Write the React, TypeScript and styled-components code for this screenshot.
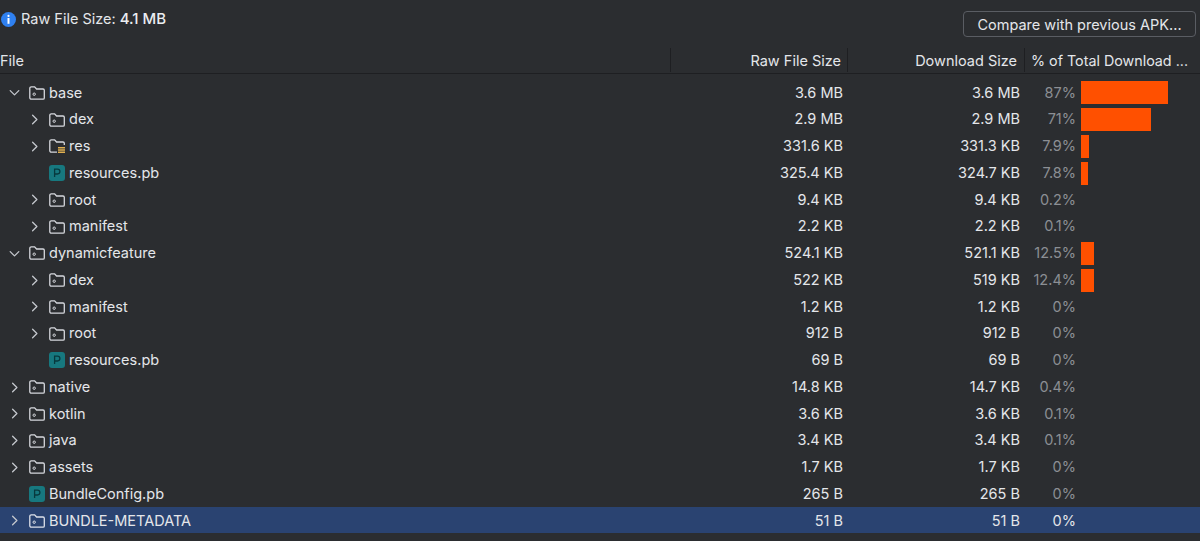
import React from "react";
import styled, { createGlobalStyle } from "styled-components";

const Global = createGlobalStyle`
  html, body { margin: 0; padding: 0; background: #2b2d30; }
  body { font-family: Inter, "Noto Sans", sans-serif; overflow: hidden; }
`;

const Page = styled.div`
  width: 1200px;
  height: 541px;
  background: #2b2d30;
  color: #e4e6ea;
  font-size: 14.5px;
  overflow: hidden;
`;

const TopBar = styled.div`
  height: 46px;
  box-sizing: border-box;
  padding: 11px 4px 0 1px;
  display: flex;
  justify-content: space-between;
  align-items: flex-start;
`;

const Summary = styled.div`
  display: flex;
  align-items: center;
  gap: 5px;
  height: 14px;
  margin-top: 1px;
  line-height: 14px;
`;

const Strong = styled.b`
  font-weight: 500;
  font-size: 15px;
  color: #eceef1;
`;

const CompareButton = styled.button`
  width: 233px;
  height: 26px;
  box-sizing: border-box;
  background: #2b2d30;
  border: 1px solid #5a5d63;
  border-radius: 4px;
  color: #e4e6ea;
  font: inherit;
  padding: 0;
`;

const columns = "671px 177px 177px 1fr";

const HeaderRow = styled.div`
  display: grid;
  grid-template-columns: ${columns};
  height: 27px;
  border-bottom: 1px solid #1e1f22;
  box-sizing: content-box;
`;

const HeaderCell = styled.div<{ $align?: string; $pad?: number; $divider?: boolean }>`
  text-align: ${(p) => p.$align ?? "left"};
  padding: 0 ${(p) => p.$pad ?? 0}px 0 0;
  border-right: ${(p) => (p.$divider ? "1px solid #1e1f22" : "0")};
  white-space: nowrap;
  overflow: hidden;
  box-sizing: border-box;
  height: 24px;
  line-height: 26px;
  margin-top: 2px;
`;

const PercentHeader = styled(HeaderCell)`
  padding-left: 6px;
  font-size: 14.3px;
`;

const Tree = styled.div`
  display: flex;
  flex-direction: column;
  padding-top: 4.5px;
`;

const Row = styled.div<{ $selected?: boolean }>`
  display: grid;
  grid-template-columns: ${columns};
  height: 26.75px;
  line-height: 26.75px;
  background: ${(p) => (p.$selected ? "#2a4371" : "transparent")};
`;

const NameCell = styled.div<{ $depth: number }>`
  display: flex;
  align-items: center;
  height: 26.75px;
  box-sizing: border-box;
  padding: 2px 0 0 ${(p) => 9 + p.$depth * 20}px;
`;

const ChevronSlot = styled.span`
  width: 11px;
  height: 11px;
  margin-right: 9px;
  display: flex;
  flex: none;
`;

const Label = styled.span`
  margin-left: 4px;
  white-space: nowrap;
`;

const Value = styled.div<{ $pad: number }>`
  text-align: right;
  padding: 1px ${(p) => p.$pad}px 0 0;
`;

const PercentCell = styled.div`
  display: flex;
  align-items: center;
  height: 26.75px;
  box-sizing: border-box;
  padding-top: 2px;
`;

const PercentText = styled.span<{ $selected?: boolean }>`
  width: 51px;
  text-align: right;
  color: ${(p) => (p.$selected ? "#e4e6ea" : "#8c8f94")};
  flex: none;
`;

const Bar = styled.span`
  height: 23px;
  margin-left: 5px;
  background: #ff5000;
  flex: none;
`;

const Chevron = ({ open }: { open?: boolean }) => (
  <svg width="11" height="11" viewBox="0 0 11 11" fill="none" stroke="#c4c7cd" strokeWidth="1.3" strokeLinecap="round" strokeLinejoin="round">
    {open ? <path d="M1.2 3.6l4.3 4.3 4.3-4.3" /> : <path d="M3.6 1.2l4.3 4.3-4.3 4.3" />}
  </svg>
);

const Folder = ({ selected }: { selected?: boolean }) => (
  <svg width="16" height="14" viewBox="0 0 16 14" fill="none" stroke={selected ? "#dde1e9" : "#d6d8dd"} strokeWidth="1.3" style={{ flex: "none" }}>
    <path d="M2.3 0.8H5.6L7.6 3H14a1.3 1.3 0 0 1 1.3 1.3V11.9A1.3 1.3 0 0 1 14 13.2H2.3A1.5 1.5 0 0 1 0.8 11.7V2.3A1.5 1.5 0 0 1 2.3 0.8Z" />
    <circle cx="5.2" cy="8.2" r="1.2" strokeWidth="1" />
  </svg>
);

const ResFolder = () => (
  <svg width="16" height="14" viewBox="0 0 16 14" fill="none" style={{ flex: "none" }}>
    <path d="M8 13.2H2.3A1.5 1.5 0 0 1 0.8 11.7V2.3A1.5 1.5 0 0 1 2.3 0.8H5.6L7.6 3H14a1.3 1.3 0 0 1 1.3 1.3V6" stroke="#d6d8dd" strokeWidth="1.3" />
    <path d="M9 8h7v1.4H9zM9 10.3h7v1.4H9zM9 12.6h7V14H9z" fill="#e0b050" />
  </svg>
);

const Proto = () => (
  <svg width="16" height="16" viewBox="0 0 16 16" style={{ flex: "none" }}>
    <rect width="16" height="16" rx="3" fill="#17787f" />
    <path d="M5.6 12V4.2h2.9a2.4 2.4 0 0 1 0 4.8H5.6" fill="none" stroke="#07393e" strokeWidth="1.3" />
  </svg>
);

const Info = () => (
  <svg width="15" height="15" viewBox="0 0 15 15" style={{ flex: "none" }}>
    <circle cx="7.5" cy="7.5" r="7.5" fill="#2f80f0" />
    <circle cx="7.5" cy="3.9" r="1.1" fill="#fff" />
    <rect x="6.5" y="6" width="2" height="5.8" fill="#fff" />
  </svg>
);

type Item = {
  name: string;
  depth: number;
  kind: "folder" | "res" | "proto";
  expand?: "open" | "closed";
  raw: string;
  dl: string;
  pct: string;
  bar?: number;
  selected?: boolean;
};

const items: Item[] = [
  { name: "base", depth: 0, kind: "folder", expand: "open", raw: "3.6 MB", dl: "3.6 MB", pct: "87%", bar: 87 },
  { name: "dex", depth: 1, kind: "folder", expand: "closed", raw: "2.9 MB", dl: "2.9 MB", pct: "71%", bar: 70 },
  { name: "res", depth: 1, kind: "res", expand: "closed", raw: "331.6 KB", dl: "331.3 KB", pct: "7.9%", bar: 8 },
  { name: "resources.pb", depth: 1, kind: "proto", raw: "325.4 KB", dl: "324.7 KB", pct: "7.8%", bar: 7 },
  { name: "root", depth: 1, kind: "folder", expand: "closed", raw: "9.4 KB", dl: "9.4 KB", pct: "0.2%" },
  { name: "manifest", depth: 1, kind: "folder", expand: "closed", raw: "2.2 KB", dl: "2.2 KB", pct: "0.1%" },
  { name: "dynamicfeature", depth: 0, kind: "folder", expand: "open", raw: "524.1 KB", dl: "521.1 KB", pct: "12.5%", bar: 12.5 },
  { name: "dex", depth: 1, kind: "folder", expand: "closed", raw: "522 KB", dl: "519 KB", pct: "12.4%", bar: 12.5 },
  { name: "manifest", depth: 1, kind: "folder", expand: "closed", raw: "1.2 KB", dl: "1.2 KB", pct: "0%" },
  { name: "root", depth: 1, kind: "folder", expand: "closed", raw: "912 B", dl: "912 B", pct: "0%" },
  { name: "resources.pb", depth: 1, kind: "proto", raw: "69 B", dl: "69 B", pct: "0%" },
  { name: "native", depth: 0, kind: "folder", expand: "closed", raw: "14.8 KB", dl: "14.7 KB", pct: "0.4%" },
  { name: "kotlin", depth: 0, kind: "folder", expand: "closed", raw: "3.6 KB", dl: "3.6 KB", pct: "0.1%" },
  { name: "java", depth: 0, kind: "folder", expand: "closed", raw: "3.4 KB", dl: "3.4 KB", pct: "0.1%" },
  { name: "assets", depth: 0, kind: "folder", expand: "closed", raw: "1.7 KB", dl: "1.7 KB", pct: "0%" },
  { name: "BundleConfig.pb", depth: 0, kind: "proto", raw: "265 B", dl: "265 B", pct: "0%" },
  { name: "BUNDLE-METADATA", depth: 0, kind: "folder", expand: "closed", raw: "51 B", dl: "51 B", pct: "0%", selected: true },
];

export default function App() {
  return (
    <Page>
      <Global />
      <TopBar>
        <Summary>
          <Info />
          <span>
            Raw File Size: <Strong>4.1 MB</Strong>
          </span>
        </Summary>
        <CompareButton>Compare with previous APK...</CompareButton>
      </TopBar>
      <HeaderRow>
        <HeaderCell $divider>File</HeaderCell>
        <HeaderCell $align="right" $pad={6} $divider>
          Raw File Size
        </HeaderCell>
        <HeaderCell $align="right" $pad={7} $divider>
          Download Size
        </HeaderCell>
        <PercentHeader>% of Total Download ...</PercentHeader>
      </HeaderRow>
      <Tree>
        {items.map((it, i) => (
          <Row key={i} $selected={it.selected}>
            <NameCell $depth={it.depth}>
              <ChevronSlot>{it.expand && <Chevron open={it.expand === "open"} />}</ChevronSlot>
              {it.kind === "folder" && <Folder selected={it.selected} />}
              {it.kind === "res" && <ResFolder />}
              {it.kind === "proto" && <Proto />}
              <Label>{it.name}</Label>
            </NameCell>
            <Value $pad={5}>{it.raw}</Value>
            <Value $pad={5}>{it.dl}</Value>
            <PercentCell>
              <PercentText $selected={it.selected}>{it.pct}</PercentText>
              {it.bar !== undefined && <Bar style={{ width: it.bar }} />}
            </PercentCell>
          </Row>
        ))}
      </Tree>
    </Page>
  );
}
